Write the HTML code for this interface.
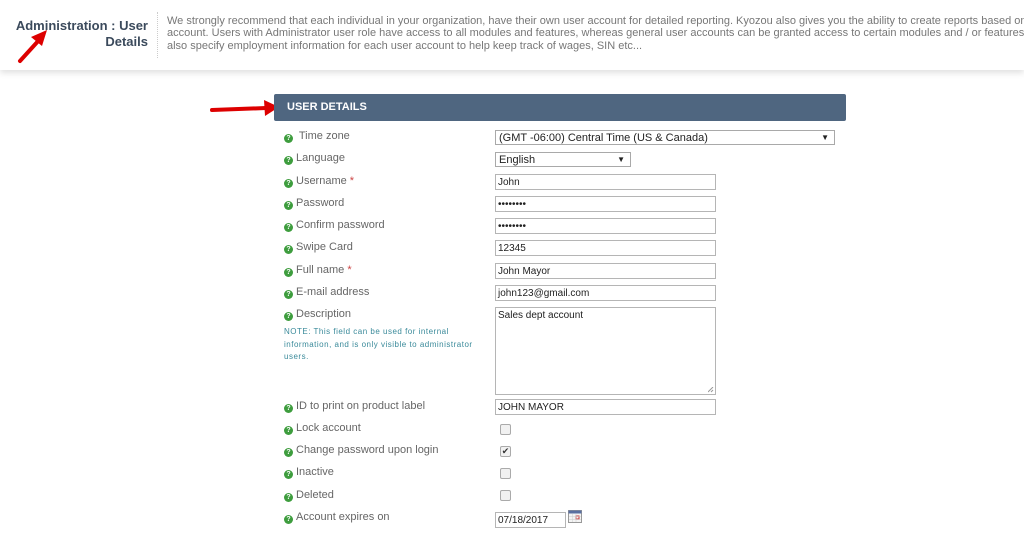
<!DOCTYPE html>
<html><head><meta charset="utf-8"><style>
*{box-sizing:border-box;margin:0;padding:0}
body{width:1024px;height:540px;background:#fff;font-family:"Liberation Sans",Arial,sans-serif;position:relative;overflow:hidden}
.hdr{position:absolute;left:0;top:0;width:1024px;height:70px;background:#fff;box-shadow:0 3px 6px rgba(0,0,0,.12)}
.title{position:absolute;left:0;width:148px;top:18px;text-align:right;font-size:13px;font-weight:bold;color:#3b4a5c;line-height:16px}
.sep{position:absolute;left:157px;top:12px;height:46px;border-left:1px dotted #ccc}
.desc{position:absolute;left:167px;top:15px;width:870px;font-size:11px;color:#777;line-height:12.4px;white-space:nowrap}
.bar{position:absolute;left:274px;top:94px;width:572px;height:27px;background:#4f6680;color:#fff;font-size:11px;font-weight:bold;line-height:27px;padding-left:13px;border-radius:2px}
.lbl{position:absolute;left:284px;font-size:11px;color:#666;line-height:13px;white-space:nowrap}
.q{display:inline-block;width:9px;height:9px;border-radius:50%;background:#3e9d3e;color:#fff;font-size:7px;line-height:9px;text-align:center;font-weight:bold;vertical-align:-1px;margin-right:3px}
.st{color:#c44}
.inp{position:absolute;left:495px;width:221px;height:16px;border:1px solid #b5b5b5;font-size:10px;color:#222;line-height:15px;padding-left:2px;background:#fff}
.sel{position:absolute;left:495px;height:15px;border:1px solid #a9a9a9;font-size:11px;color:#222;line-height:14px;padding-left:3px;background:#fff}
.sel:after{content:"▼";position:absolute;right:5px;top:0;font-size:8px}
.cb{position:absolute;left:500px;width:11px;height:11px;border:1px solid #aaa;border-radius:2px;background:#f1f1f1;font-size:9px;line-height:9px;text-align:center;color:#333}
.note{position:absolute;left:284px;top:326px;width:195px;font-size:8px;letter-spacing:0.5px;color:#3a8a9a;line-height:12.5px}
</style></head><body>
<div class="hdr">
<div class="title">Administration : User<br>Details</div>
<div class="sep"></div>
<div class="desc">We strongly recommend that each individual in your organization, have their own user account for detailed reporting. Kyozou also gives you the ability to create reports based on the<br>account. Users with Administrator user role have access to all modules and features, whereas general user accounts can be granted access to certain modules and / or features. You<br>also specify employment information for each user account to help keep track of wages, SIN etc...</div>
</div>
<svg style="position:absolute;left:0;top:0" width="300" height="130">
<line x1="20" y1="61" x2="40" y2="39" stroke="#d00" stroke-width="4" stroke-linecap="round"/>
<polygon points="47,30 31,37 42,46" fill="#d00"/>
<line x1="212" y1="110" x2="266" y2="108" stroke="#d00" stroke-width="4" stroke-linecap="round"/>
<polygon points="279,107 264,100 265,116" fill="#d00"/>
</svg>
<div class="bar">USER DETAILS</div>
<div class="lbl" style="top:130px"><span class="q">?</span> Time zone</div>
<div class="lbl" style="top:152px"><span class="q">?</span>Language</div>
<div class="lbl" style="top:175px"><span class="q">?</span>Username <span class="st">*</span></div>
<div class="lbl" style="top:197px"><span class="q">?</span>Password</div>
<div class="lbl" style="top:219px"><span class="q">?</span>Confirm password</div>
<div class="lbl" style="top:241px"><span class="q">?</span>Swipe Card</div>
<div class="lbl" style="top:264px"><span class="q">?</span>Full name <span class="st">*</span></div>
<div class="lbl" style="top:286px"><span class="q">?</span>E-mail address</div>
<div class="lbl" style="top:308px"><span class="q">?</span>Description</div>
<div class="note">NOTE: This field can be used for internal information, and is only visible to administrator users.</div>
<div class="lbl" style="top:400px"><span class="q">?</span>ID to print on product label</div>
<div class="lbl" style="top:422px"><span class="q">?</span>Lock account</div>
<div class="lbl" style="top:444px"><span class="q">?</span>Change password upon login</div>
<div class="lbl" style="top:466px"><span class="q">?</span>Inactive</div>
<div class="lbl" style="top:489px"><span class="q">?</span>Deleted</div>
<div class="lbl" style="top:511px"><span class="q">?</span>Account expires on</div>
<div class="sel" style="top:130px;width:340px">(GMT -06:00) Central Time (US &amp; Canada)</div>
<div class="sel" style="top:152px;width:136px">English</div>
<div class="inp" style="top:174px">John</div>
<div class="inp" style="top:196px">••••••••</div>
<div class="inp" style="top:218px">••••••••</div>
<div class="inp" style="top:240px">12345</div>
<div class="inp" style="top:263px">John Mayor</div>
<div class="inp" style="top:285px">john123@gmail.com</div>
<div class="inp" style="top:307px;height:88px;line-height:16px">Sales dept account
<svg style="position:absolute;right:1px;bottom:1px" width="6" height="6"><path d="M5 0L0 5M5 3L3 5" stroke="#999"/></svg></div>
<div class="inp" style="top:399px">JOHN MAYOR</div>
<div class="cb" style="top:424px"></div>
<div class="cb" style="top:446px">✔</div>
<div class="cb" style="top:468px"></div>
<div class="cb" style="top:490px"></div>
<div class="inp" style="top:512px;width:71px">07/18/2017</div>
<svg style="position:absolute;left:568px;top:510px" width="14" height="13"><rect x="0.5" y="0.5" width="13" height="12" fill="#f4f4f4" stroke="#999"/><rect x="0.5" y="0.5" width="13" height="3" fill="#5a6fa0"/><rect x="8" y="6" width="3" height="3" fill="none" stroke="#c33"/><path d="M1 6.5H13M1 9.5H13M4.5 4V12M8 4V12" stroke="#ccc" stroke-width=".5"/></svg>
</body></html>
